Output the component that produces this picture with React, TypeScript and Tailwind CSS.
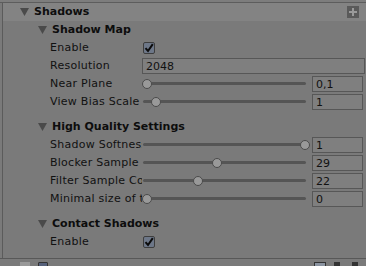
import React from "react";

const font = { fontFamily: '"DejaVu Sans", Verdana, sans-serif' };

function Tri({ className = "" }: { className?: string }) {
  return (
    <svg width="9" height="8" viewBox="0 0 9 8" className={className}>
      <path d="M0 0 H9 L4.5 8 Z" fill="#4a4a4a" />
    </svg>
  );
}

function Check() {
  return (
    <div className="flex h-[12px] w-[12px] items-center justify-center rounded-[2px] border border-[#3e3e3e] bg-[#6d7788]">
      <svg width="10" height="10" viewBox="0 0 10 10">
        <path d="M1.5 5.2 L4 8 L8.8 1.2" stroke="#0b0b0b" strokeWidth="2" fill="none" />
      </svg>
    </div>
  );
}

function Field({ value, className = "" }: { value: string; className?: string }) {
  return (
    <div
      className={`flex h-[16px] items-center border border-[#575757] bg-[#7f7f7f] pl-[3px] text-[11px] leading-none text-[#111] ${className}`}
    >
      {value}
    </div>
  );
}

function Slider({ pos, value }: { pos: number; value: string }) {
  return (
    <div className="flex flex-1 items-center">
      <div className="relative h-[16px] w-[168px]">
        <div className="absolute left-[1px] right-[4px] top-[6px] h-[3px] rounded-full bg-[#555]" />
        <div
          className="absolute top-[3px] h-[10px] w-[10px] rounded-full border border-[#4b4b4b] bg-[#999]"
          style={{ left: pos }}
        />
      </div>
      <Field value={value} className="ml-[2px] w-[51px]" />
    </div>
  );
}

function Row({ label, children }: { label: string; children: React.ReactNode }) {
  return (
    <div className="flex h-[18px] items-center">
      <div className="w-[92px] shrink-0 overflow-hidden whitespace-nowrap pl-[47px] box-content text-[11px] tracking-[0.25px] text-[#111]">
        {label}
      </div>
      {children}
    </div>
  );
}

function Section({ title }: { title: string }) {
  return (
    <div className="flex h-[18px] items-center pl-[35px]">
      <Tri className="mr-[5px]" />
      <span className="text-[11px] font-bold text-[#0d0d0d]">{title}</span>
    </div>
  );
}

export default function App() {
  return (
    <div className="relative h-[266px] w-[366px] overflow-hidden bg-[#7a7a7a]" style={font}>
      <div className="h-[2px] bg-[#7d7d7d]" />
      <div className="h-[1px] bg-[#5d5d5d]" />
      <div className="ml-[2px] flex h-[255px] flex-col border-l border-[#5b5b5b]">
        <div className="flex h-[18px] shrink-0 items-center bg-[#838383] pl-[17px] pr-[7px]">
          <Tri className="mr-[5px]" />
          <span className="flex-1 text-[11px] font-bold text-[#0d0d0d]">Shadows</span>
          <div className="flex h-[12px] w-[12px] items-center justify-center bg-[#5a5a5a]">
            <svg width="8" height="8" viewBox="0 0 8 8">
              <path d="M3 0H5V3H8V5H5V8H3V5H0V3H3Z" fill="#9a9a9a" />
            </svg>
          </div>
        </div>
        <div className="flex flex-col">
          <Section title="Shadow Map" />
          <Row label="Enable">
            <div className="ml-[1px]">
              <Check />
            </div>
          </Row>
          <Row label="Resolution">
            <Field value="2048" className="w-[223px]" />
          </Row>
          <Row label="Near Plane">
            <Slider pos={0} value="0,1" />
          </Row>
          <Row label="View Bias Scale">
            <Slider pos={9} value="1" />
          </Row>
          <div className="h-[7px]" />
          <Section title="High Quality Settings" />
          <Row label="Shadow Softness">
            <Slider pos={158} value="1" />
          </Row>
          <Row label="Blocker Sample Count">
            <Slider pos={70} value="29" />
          </Row>
          <Row label="Filter Sample Count">
            <Slider pos={51} value="22" />
          </Row>
          <Row label="Minimal size of the penumbra">
            <Slider pos={0} value="0" />
          </Row>
          <div className="h-[7px]" />
          <Section title="Contact Shadows" />
          <Row label="Enable">
            <div className="ml-[1px]">
              <Check />
            </div>
          </Row>
        </div>
      </div>
      <div className="h-[1px] bg-[#585858]" />
      <div className="flex h-[8px] items-start pl-[20px] pt-[3px]">
        <div className="h-[6px] w-[10px] bg-[#9a9a9a]" />
        <div className="ml-[8px] h-[6px] w-[10px] rounded-[1px] border border-[#333] bg-[#55607a]" />
        <div className="flex-1" />
        <div className="h-[6px] w-[12px] border border-[#333] bg-[#8a93a0]" />
        <div className="ml-[8px] h-[6px] w-[6px] bg-[#333]" />
        <div className="ml-[12px] mr-[8px] h-[6px] w-[6px] bg-[#333]" />
      </div>
    </div>
  );
}
